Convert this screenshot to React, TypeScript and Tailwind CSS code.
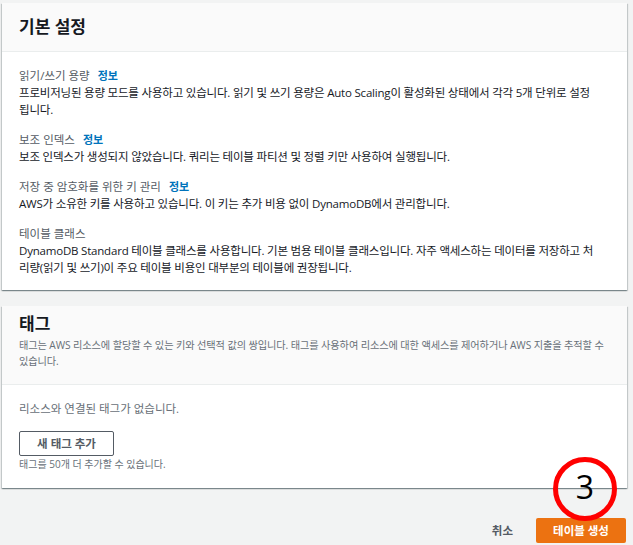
import React from 'react'

const font = { fontFamily: '"Open Sans", "Noto Sans CJK KR", sans-serif' }

const Info = () => <span className="ml-2 text-[11px] font-bold text-[#0073bb] tracking-normal">정보</span>

const Field = ({ label, info, last, children }: { label: string; info?: boolean; last?: boolean; children: React.ReactNode }) => (
  <div className={last ? '' : 'mb-[13px]'}>
    <div className="text-[11.5px] leading-[17px] text-[#545b64]">
      {label}
      {info && <Info />}
    </div>
    <div className="text-[11.5px] leading-[17px] tracking-[-0.2px] text-[#16191f] break-all">{children}</div>
  </div>
)

const cardShadow =
  'shadow-[0_1px_1px_0_rgba(0,28,36,0.3),1px_1px_1px_0_rgba(0,28,36,0.15),-1px_1px_1px_0_rgba(0,28,36,0.15)]'

const App = () => {
  return (
    <div className="relative w-[633px] h-[545px] overflow-hidden bg-[#f2f3f3]" style={font}>
      <div className={`ml-[2px] mt-[3px] w-[625px] bg-white ${cardShadow}`}>
        <div className="h-[49px] bg-[#fafafa] border-b border-[#eaeded] px-[17px] flex items-center">
          <h2 className="text-[17px] font-bold text-[#16191f]">기본 설정</h2>
        </div>
        <div className="pl-[17px] pr-[30px] pt-[15px] pb-[14px]">
          <Field label="읽기/쓰기 용량" info>
            프로비저닝된 용량 모드를 사용하고 있습니다. 읽기 및 쓰기 용량은 Auto Scaling이 활성화된 상태에서 각각 5개 단위로 설정됩니다.
          </Field>
          <Field label="보조 인덱스" info>
            보조 인덱스가 생성되지 않았습니다. 쿼리는 테이블 파티션 및 정렬 키만 사용하여 실행됩니다.
          </Field>
          <Field label="저장 중 암호화를 위한 키 관리" info>
            AWS가 소유한 키를 사용하고 있습니다. 이 키는 추가 비용 없이 DynamoDB에서 관리합니다.
          </Field>
          <Field label="테이블 클래스" last>
            DynamoDB Standard 테이블 클래스를 사용합니다. 기본 범용 테이블 클래스입니다. 자주 액세스하는 데이터를 저장하고 처리량(읽기 및 쓰기)이 주요 테이블 비용인 대부분의 테이블에 권장됩니다.
          </Field>
        </div>
      </div>

      <div className={`ml-[2px] mt-[16px] w-[625px] bg-white ${cardShadow}`}>
        <div className="bg-[#fafafa] border-b border-[#eaeded] pl-[17px] pr-[22px] pt-[6px] pb-[15px]">
          <h2 className="text-[17px] font-bold leading-[24px] text-[#16191f]">태그</h2>
          <p className="mt-[1px] text-[10.2px] leading-[16px] tracking-[-0.1px] text-[#687078] break-all">
            태그는 AWS 리소스에 할당할 수 있는 키와 선택적 값의 쌍입니다. 태그를 사용하여 리소스에 대한 액세스를 제어하거나 AWS 지출을 추적할 수 있습니다.
          </p>
        </div>
        <div className="px-[17px] pt-[15px] pb-[17px]">
          <p className="text-[11.5px] leading-[17px] text-[#687078]">리소스와 연결된 태그가 없습니다.</p>
          <button className="mt-[14px] w-[95px] h-[25px] border border-[#545b64] rounded-[2px] text-[11.5px] font-bold text-[#545b64] bg-white">
            새 태그 추가
          </button>
          <p className="mt-[1px] text-[10px] leading-[14px] text-[#687078]">태그를 50개 더 추가할 수 있습니다.</p>
        </div>
      </div>

      <div className="flex justify-end items-center mt-[30px] pr-[7px] gap-[23px]">
        <button className="text-[11.5px] font-bold text-[#545b64]">취소</button>
        <button className="w-[90px] h-[25px] bg-[#ec7211] rounded-[2px] text-[11.5px] font-bold text-white">테이블 생성</button>
      </div>

      <div className="absolute left-[553px] top-[457px] w-[64px] h-[64px] rounded-full border-[5px] border-[#ff0000] flex items-center justify-center">
        <span className="-mt-[4px] text-[32px] leading-none text-black" style={{ fontFamily: '"Open Sans", sans-serif' }}>3</span>
      </div>
    </div>
  )
}

export default App
